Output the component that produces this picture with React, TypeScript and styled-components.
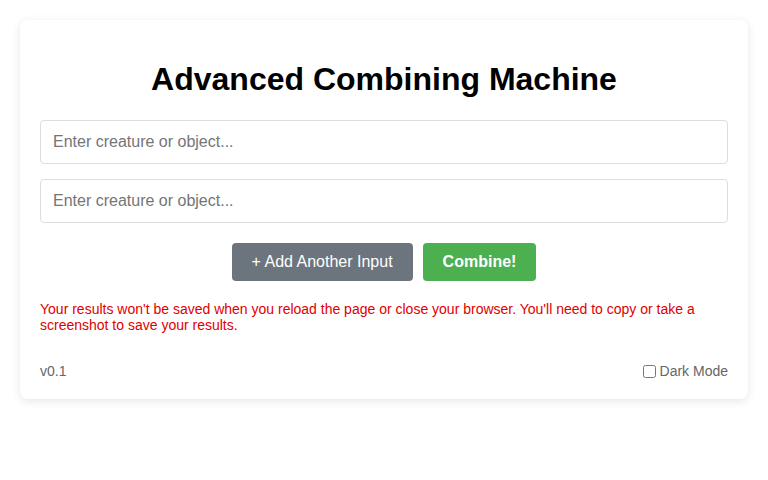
import React, { FC, useState } from 'react';
import styled, { createGlobalStyle } from 'styled-components';

const GlobalStyle = createGlobalStyle`
  body {
    margin: 0;
    background: #fff;
    font-family: "Liberation Sans", Arial, sans-serif;
  }
`;

const StyledPage = styled.div`
  padding: 20px;
`;

const StyledCard = styled.div`
  background: #fff;
  border-radius: 8px;
  box-shadow: 0 2px 10px rgba(0, 0, 0, 0.1);
  padding: 20px;
`;

const StyledTitle = styled.h1`
  margin: 21px 0 22px;
  text-align: center;
  font-size: 32px;
  line-height: 37px;
  font-weight: 700;
  color: #000;
`;

const StyledInputList = styled.div`
  display: flex;
  flex-direction: column;
  gap: 15px;
`;

const StyledInput = styled.input`
  box-sizing: border-box;
  width: 100%;
  height: 44px;
  padding: 12px;
  border: 1px solid #ddd;
  border-radius: 4px;
  font-family: inherit;
  font-size: 16px;
  color: #333;
  outline: none;

  &::placeholder {
    color: #757575;
  }
`;

const StyledButtonRow = styled.div`
  display: flex;
  justify-content: center;
  gap: 10px;
  margin-top: 20px;
`;

const StyledButton = styled.button<{ $variant: 'secondary' | 'primary' }>`
  height: 38px;
  padding: 0 20px;
  border: none;
  border-radius: 4px;
  font-family: inherit;
  font-size: 16px;
  color: #fff;
  cursor: pointer;
  background: ${props => (props.$variant === 'primary' ? '#4caf50' : '#6c757d')};
  font-weight: ${props => (props.$variant === 'primary' ? 700 : 400)};
`;

const StyledWarning = styled.p`
  margin: 20px 0 0;
  font-size: 14px;
  line-height: 16px;
  color: #e00000;
`;

const StyledFooter = styled.div`
  display: flex;
  justify-content: space-between;
  align-items: center;
  margin-top: 30px;
  font-size: 14px;
  line-height: 16px;
  color: #666;
`;

const StyledToggle = styled.label`
  display: flex;
  align-items: center;
  gap: 4px;
  cursor: pointer;

  input {
    margin: 0;
    width: 13px;
    height: 13px;
  }
`;

const App: FC = () => {
  const [inputs, setInputs] = useState<string[]>(['', '']);
  const [dark, setDark] = useState(false);

  return (
    <>
      <GlobalStyle />
      <StyledPage>
        <StyledCard>
          <StyledTitle>Advanced Combining Machine</StyledTitle>
          <StyledInputList>
            {inputs.map((value, index) => (
              <StyledInput
                key={index}
                value={value}
                placeholder="Enter creature or object..."
                onChange={e => {
                  const next = [...inputs];
                  next[index] = e.target.value;
                  setInputs(next);
                }}
              />
            ))}
          </StyledInputList>
          <StyledButtonRow>
            <StyledButton $variant="secondary" onClick={() => setInputs([...inputs, ''])}>
              + Add Another Input
            </StyledButton>
            <StyledButton $variant="primary">Combine!</StyledButton>
          </StyledButtonRow>
          <StyledWarning>
            Your results won't be saved when you reload the page or close your browser. You'll
            need to copy or take a screenshot to save your results.
          </StyledWarning>
          <StyledFooter>
            <span>v0.1</span>
            <StyledToggle>
              <input type="checkbox" checked={dark} onChange={() => setDark(!dark)} />
              Dark Mode
            </StyledToggle>
          </StyledFooter>
        </StyledCard>
      </StyledPage>
    </>
  );
};

export default App;
